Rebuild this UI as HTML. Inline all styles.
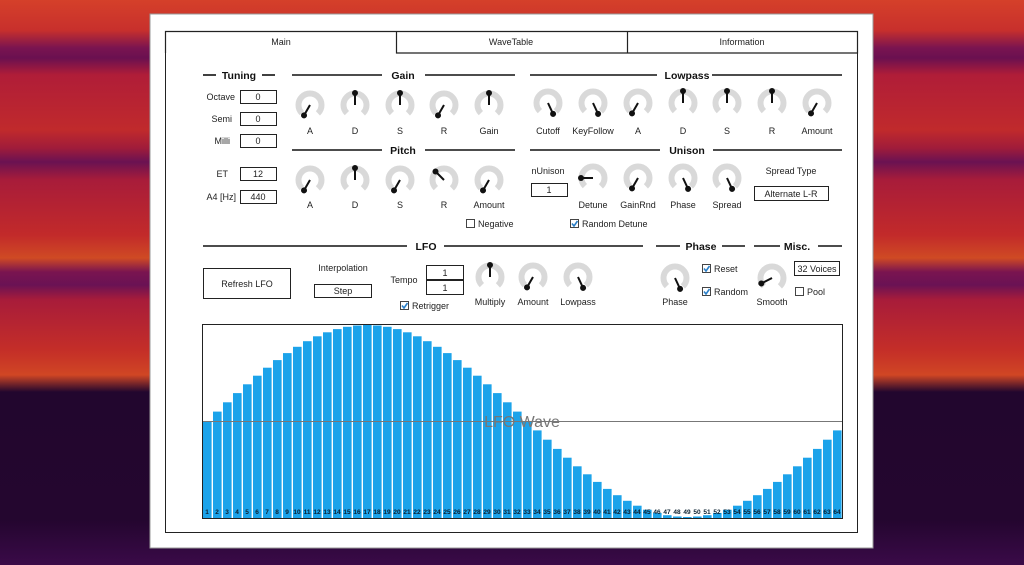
<!DOCTYPE html>
<html><head><meta charset="utf-8">
<style>
html,body{margin:0;padding:0;width:1024px;height:565px;overflow:hidden}
body{background:linear-gradient(to bottom,#d5402a 0px,#c8302c 30px,#7a1450 48px,#6a1050 58px,#b01d38 75px,#c02a2c 130px,#a01c3a 148px,#6a1252 162px,#a81c3a 180px,#c22a2a 235px,#cf4a24 258px,#7a1450 272px,#6a1254 285px,#a81c3a 300px,#c42e28 350px,#d04624 375px,#22062e 392px,#24062f 520px,#3a0a48 565px);font-family:"Liberation Sans",Arial,sans-serif}
svg{position:absolute;left:0;top:0}
text{font-family:"Liberation Sans",Arial,sans-serif;font-size:9px;fill:#222}
.h{font-weight:bold;font-size:10.5px;fill:#111}
.c{text-anchor:middle}
.r{text-anchor:end}
.n{font-size:6.5px;font-weight:bold;fill:#0a2030;text-anchor:middle}
</style></head><body>
<svg width="1024" height="565" viewBox="0 0 1024 565">
<defs>
<g id="ring"><circle r="11.5" fill="none" stroke="#d9d9d9" stroke-width="6" stroke-dasharray="54.2 18.06" transform="rotate(135)"/></g>
<g id="ptr"><line x1="0" y1="0" x2="0" y2="-12" stroke="#111" stroke-width="2"/><circle cy="-12" r="3" fill="#111"/></g>
</defs>
<rect x="150" y="14" width="723" height="534" fill="#fff" stroke="#999" stroke-width="1"/>
<!-- inner frame -->
<path d="M165.5 53 V532.5 H857.5 V53" fill="none" stroke="#222" stroke-width="1"/>
<path d="M165.5 53 V31.5 H857.5 V53 H396.5 V31.5 M627.5 31.5 V53" fill="none" stroke="#222" stroke-width="1.2"/>
<text class="c" x="281" y="45">Main</text>
<text class="c" x="511" y="45">WaveTable</text>
<text class="c" x="742" y="45">Information</text>

<g stroke="#111" stroke-width="1.6">
<line x1="203" y1="75" x2="216" y2="75"/><line x1="262" y1="75" x2="275" y2="75"/>
<line x1="292" y1="75" x2="382" y2="75"/><line x1="425" y1="75" x2="515" y2="75"/>
<line x1="530" y1="75" x2="657" y2="75"/><line x1="712" y1="75" x2="842" y2="75"/>
<line x1="292" y1="150" x2="382" y2="150"/><line x1="425" y1="150" x2="515" y2="150"/>
<line x1="530" y1="150" x2="660" y2="150"/><line x1="713" y1="150" x2="842" y2="150"/>
<line x1="203" y1="246" x2="407" y2="246"/><line x1="444" y1="246" x2="643" y2="246"/>
<line x1="656" y1="246" x2="680" y2="246"/><line x1="722" y1="246" x2="745" y2="246"/>
<line x1="754" y1="246" x2="780" y2="246"/><line x1="818" y1="246" x2="842" y2="246"/>
</g>
<text class="h c" x="239" y="79">Tuning</text>
<text class="h c" x="403" y="79">Gain</text>
<text class="h c" x="687" y="79">Lowpass</text>
<text class="h c" x="403" y="154">Pitch</text>
<text class="h c" x="687" y="154">Unison</text>
<text class="h c" x="426" y="250">LFO</text>
<text class="h c" x="701" y="250">Phase</text>
<text class="h c" x="797" y="250">Misc.</text>

<!-- tuning -->
<g fill="#fff" stroke="#222" stroke-width="1">
<rect x="240.5" y="90.5" width="36" height="13"/>
<rect x="240.5" y="112.5" width="36" height="13"/>
<rect x="240.5" y="134.5" width="36" height="13"/>
<rect x="240.5" y="167.5" width="36" height="13"/>
<rect x="240.5" y="190.5" width="36" height="13"/>
<rect x="531.5" y="183.5" width="36" height="13"/>
<rect x="754.5" y="186.5" width="74" height="14"/>
<rect x="203.5" y="268.5" width="87" height="30"/>
<rect x="314.5" y="284.5" width="57" height="13"/>
<rect x="426.5" y="265.5" width="37" height="14"/>
<rect x="426.5" y="280.5" width="37" height="14"/>
<rect x="794.5" y="261.5" width="45" height="14"/>
</g>
<text class="r" x="235" y="100">Octave</text><text class="c" x="258" y="100">0</text>
<text class="r" x="232" y="122">Semi</text><text class="c" x="258" y="122">0</text>
<text class="r" x="230" y="144">Milli</text><text class="c" x="258" y="144">0</text>
<text class="r" x="228" y="177">ET</text><text class="c" x="258" y="177">12</text>
<text class="r" x="236" y="200">A4 [Hz]</text><text class="c" x="258" y="200">440</text>
<text class="c" x="548" y="174">nUnison</text><text class="c" x="549" y="193">1</text>
<text class="c" x="791" y="174">Spread Type</text><text class="c" x="791" y="197">Alternate L-R</text>
<text class="c" x="247" y="287">Refresh LFO</text>
<text class="c" x="343" y="271">Interpolation</text><text class="c" x="343" y="294">Step</text>
<text class="c" x="404" y="283">Tempo</text>
<text class="c" x="445" y="276">1</text><text class="c" x="445" y="291">1</text>
<text class="c" x="817" y="272">32 Voices</text>

<!-- checkboxes -->
<g fill="#fff" stroke="#444" stroke-width="1">
<rect x="466.5" y="219.5" width="8" height="8"/>
<rect x="570.5" y="219.5" width="8" height="8"/>
<rect x="400.5" y="301.5" width="8" height="8"/>
<rect x="702.5" y="264.5" width="8" height="8"/>
<rect x="702.5" y="287.5" width="8" height="8"/>
<rect x="795.5" y="287.5" width="8" height="8"/>
</g>
<g fill="none" stroke="#2a7fc8" stroke-width="1.6">
<path d="M572 223.5 l2 2.5 l3.5 -5"/>
<path d="M402 305.5 l2 2.5 l3.5 -5"/>
<path d="M704 268.5 l2 2.5 l3.5 -5"/>
<path d="M704 291.5 l2 2.5 l3.5 -5"/>
</g>
<text x="478" y="227">Negative</text>
<text x="582" y="227">Random Detune</text>
<text x="412" y="309">Retrigger</text>
<text x="714" y="272">Reset</text>
<text x="714" y="295">Random</text>
<text x="807" y="295">Pool</text>

<!-- knobs -->
<g>
<g transform="translate(310,105)"><use href="#ring"/><use href="#ptr" transform="rotate(-150)"/></g>
<g transform="translate(355,105)"><use href="#ring"/><use href="#ptr"/></g>
<g transform="translate(400,105)"><use href="#ring"/><use href="#ptr"/></g>
<g transform="translate(444,105)"><use href="#ring"/><use href="#ptr" transform="rotate(-150)"/></g>
<g transform="translate(489,105)"><use href="#ring"/><use href="#ptr"/></g>
<g transform="translate(310,180)"><use href="#ring"/><use href="#ptr" transform="rotate(-150)"/></g>
<g transform="translate(355,180)"><use href="#ring"/><use href="#ptr"/></g>
<g transform="translate(400,180)"><use href="#ring"/><use href="#ptr" transform="rotate(-150)"/></g>
<g transform="translate(444,180)"><use href="#ring"/><use href="#ptr" transform="rotate(-45)"/></g>
<g transform="translate(489,180)"><use href="#ring"/><use href="#ptr" transform="rotate(-150)"/></g>
<g transform="translate(548,103)"><use href="#ring"/><use href="#ptr" transform="rotate(155)"/></g>
<g transform="translate(593,103)"><use href="#ring"/><use href="#ptr" transform="rotate(155)"/></g>
<g transform="translate(638,103)"><use href="#ring"/><use href="#ptr" transform="rotate(-150)"/></g>
<g transform="translate(683,103)"><use href="#ring"/><use href="#ptr"/></g>
<g transform="translate(727,103)"><use href="#ring"/><use href="#ptr"/></g>
<g transform="translate(772,103)"><use href="#ring"/><use href="#ptr"/></g>
<g transform="translate(817,103)"><use href="#ring"/><use href="#ptr" transform="rotate(-150)"/></g>
<g transform="translate(593,178)"><use href="#ring"/><use href="#ptr" transform="rotate(-90)"/></g>
<g transform="translate(638,178)"><use href="#ring"/><use href="#ptr" transform="rotate(-150)"/></g>
<g transform="translate(683,178)"><use href="#ring"/><use href="#ptr" transform="rotate(155)"/></g>
<g transform="translate(727,178)"><use href="#ring"/><use href="#ptr" transform="rotate(155)"/></g>
<g transform="translate(490,277)"><use href="#ring"/><use href="#ptr"/></g>
<g transform="translate(533,277)"><use href="#ring"/><use href="#ptr" transform="rotate(-150)"/></g>
<g transform="translate(578,277)"><use href="#ring"/><use href="#ptr" transform="rotate(155)"/></g>
<g transform="translate(675,278)"><use href="#ring"/><use href="#ptr" transform="rotate(155)"/></g>
<g transform="translate(772,278)"><use href="#ring"/><use href="#ptr" transform="rotate(-117)"/></g>
</g>
<g class="c">
<text class="c" x="310" y="134">A</text><text class="c" x="355" y="134">D</text><text class="c" x="400" y="134">S</text><text class="c" x="444" y="134">R</text><text class="c" x="489" y="134">Gain</text>
<text class="c" x="310" y="208">A</text><text class="c" x="355" y="208">D</text><text class="c" x="400" y="208">S</text><text class="c" x="444" y="208">R</text><text class="c" x="489" y="208">Amount</text>
<text class="c" x="548" y="134">Cutoff</text><text class="c" x="593" y="134">KeyFollow</text><text class="c" x="638" y="134">A</text><text class="c" x="683" y="134">D</text><text class="c" x="727" y="134">S</text><text class="c" x="772" y="134">R</text><text class="c" x="817" y="134">Amount</text>
<text class="c" x="593" y="208">Detune</text><text class="c" x="638" y="208">GainRnd</text><text class="c" x="683" y="208">Phase</text><text class="c" x="727" y="208">Spread</text>
<text class="c" x="490" y="305">Multiply</text><text class="c" x="533" y="305">Amount</text><text class="c" x="578" y="305">Lowpass</text>
<text class="c" x="675" y="305">Phase</text><text class="c" x="772" y="305">Smooth</text>
</g>

<!-- LFO graph -->
<rect x="202.5" y="324.5" width="640" height="194" fill="#fff" stroke="#222" stroke-width="1"/>
<g fill="#1ca3ea">
<rect x="203" y="421" width="8.6" height="97"/>
<rect x="213" y="411.6" width="8.6" height="106.4"/>
<rect x="223" y="402.3" width="8.6" height="115.7"/>
<rect x="233" y="393.1" width="8.6" height="124.9"/>
<rect x="243" y="384.3" width="8.6" height="133.7"/>
<rect x="253" y="375.7" width="8.6" height="142.3"/>
<rect x="263" y="367.7" width="8.6" height="150.3"/>
<rect x="273" y="360.1" width="8.6" height="157.9"/>
<rect x="283" y="353.1" width="8.6" height="164.9"/>
<rect x="293" y="346.8" width="8.6" height="171.2"/>
<rect x="303" y="341.2" width="8.6" height="176.8"/>
<rect x="313" y="336.3" width="8.6" height="181.7"/>
<rect x="323" y="332.3" width="8.6" height="185.7"/>
<rect x="333" y="329.1" width="8.6" height="188.9"/>
<rect x="343" y="326.8" width="8.6" height="191.2"/>
<rect x="353" y="325.5" width="8.6" height="192.5"/>
<rect x="363" y="325" width="8.6" height="193"/>
<rect x="373" y="325.5" width="8.6" height="192.5"/>
<rect x="383" y="326.8" width="8.6" height="191.2"/>
<rect x="393" y="329.1" width="8.6" height="188.9"/>
<rect x="403" y="332.3" width="8.6" height="185.7"/>
<rect x="413" y="336.3" width="8.6" height="181.7"/>
<rect x="423" y="341.2" width="8.6" height="176.8"/>
<rect x="433" y="346.8" width="8.6" height="171.2"/>
<rect x="443" y="353.1" width="8.6" height="164.9"/>
<rect x="453" y="360.1" width="8.6" height="157.9"/>
<rect x="463" y="367.7" width="8.6" height="150.3"/>
<rect x="473" y="375.7" width="8.6" height="142.3"/>
<rect x="483" y="384.3" width="8.6" height="133.7"/>
<rect x="493" y="393.1" width="8.6" height="124.9"/>
<rect x="503" y="402.3" width="8.6" height="115.7"/>
<rect x="513" y="411.6" width="8.6" height="106.4"/>
<rect x="523" y="421" width="8.6" height="97"/>
<rect x="533" y="430.4" width="8.6" height="87.6"/>
<rect x="543" y="439.7" width="8.6" height="78.3"/>
<rect x="553" y="448.9" width="8.6" height="69.1"/>
<rect x="563" y="457.7" width="8.6" height="60.3"/>
<rect x="573" y="466.3" width="8.6" height="51.7"/>
<rect x="583" y="474.3" width="8.6" height="43.7"/>
<rect x="593" y="481.9" width="8.6" height="36.1"/>
<rect x="603" y="488.9" width="8.6" height="29.1"/>
<rect x="613" y="495.2" width="8.6" height="22.8"/>
<rect x="623" y="500.8" width="8.6" height="17.2"/>
<rect x="633" y="505.7" width="8.6" height="12.3"/>
<rect x="643" y="509.7" width="8.6" height="8.3"/>
<rect x="653" y="512.9" width="8.6" height="5.1"/>
<rect x="663" y="515.2" width="8.6" height="2.8"/>
<rect x="673" y="516.5" width="8.6" height="1.5"/>
<rect x="683" y="517" width="8.6" height="1"/>
<rect x="693" y="516.5" width="8.6" height="1.5"/>
<rect x="703" y="515.2" width="8.6" height="2.8"/>
<rect x="713" y="512.9" width="8.6" height="5.1"/>
<rect x="723" y="509.7" width="8.6" height="8.3"/>
<rect x="733" y="505.7" width="8.6" height="12.3"/>
<rect x="743" y="500.8" width="8.6" height="17.2"/>
<rect x="753" y="495.2" width="8.6" height="22.8"/>
<rect x="763" y="488.9" width="8.6" height="29.1"/>
<rect x="773" y="481.9" width="8.6" height="36.1"/>
<rect x="783" y="474.3" width="8.6" height="43.7"/>
<rect x="793" y="466.3" width="8.6" height="51.7"/>
<rect x="803" y="457.7" width="8.6" height="60.3"/>
<rect x="813" y="448.9" width="8.6" height="69.1"/>
<rect x="823" y="439.7" width="8.6" height="78.3"/>
<rect x="833" y="430.4" width="8.6" height="87.6"/>
</g>
<line x1="203" y1="421.5" x2="842" y2="421.5" stroke="#777" stroke-width="1"/>
<text class="c" x="522" y="427" style="font-size:16px;fill:#777">LFO Wave</text>
<g>
<text class="n" x="207" y="514">1</text><text class="n" x="217" y="514">2</text><text class="n" x="227" y="514">3</text><text class="n" x="237" y="514">4</text><text class="n" x="247" y="514">5</text><text class="n" x="257" y="514">6</text><text class="n" x="267" y="514">7</text><text class="n" x="277" y="514">8</text>
<text class="n" x="287" y="514">9</text><text class="n" x="297" y="514">10</text><text class="n" x="307" y="514">11</text><text class="n" x="317" y="514">12</text><text class="n" x="327" y="514">13</text><text class="n" x="337" y="514">14</text><text class="n" x="347" y="514">15</text><text class="n" x="357" y="514">16</text>
<text class="n" x="367" y="514">17</text><text class="n" x="377" y="514">18</text><text class="n" x="387" y="514">19</text><text class="n" x="397" y="514">20</text><text class="n" x="407" y="514">21</text><text class="n" x="417" y="514">22</text><text class="n" x="427" y="514">23</text><text class="n" x="437" y="514">24</text>
<text class="n" x="447" y="514">25</text><text class="n" x="457" y="514">26</text><text class="n" x="467" y="514">27</text><text class="n" x="477" y="514">28</text><text class="n" x="487" y="514">29</text><text class="n" x="497" y="514">30</text><text class="n" x="507" y="514">31</text><text class="n" x="517" y="514">32</text>
<text class="n" x="527" y="514">33</text><text class="n" x="537" y="514">34</text><text class="n" x="547" y="514">35</text><text class="n" x="557" y="514">36</text><text class="n" x="567" y="514">37</text><text class="n" x="577" y="514">38</text><text class="n" x="587" y="514">39</text><text class="n" x="597" y="514">40</text>
<text class="n" x="607" y="514">41</text><text class="n" x="617" y="514">42</text><text class="n" x="627" y="514">43</text><text class="n" x="637" y="514">44</text><text class="n" x="647" y="514">45</text><text class="n" x="657" y="514">46</text><text class="n" x="667" y="514">47</text><text class="n" x="677" y="514">48</text>
<text class="n" x="687" y="514">49</text><text class="n" x="697" y="514">50</text><text class="n" x="707" y="514">51</text><text class="n" x="717" y="514">52</text><text class="n" x="727" y="514">53</text><text class="n" x="737" y="514">54</text><text class="n" x="747" y="514">55</text><text class="n" x="757" y="514">56</text>
<text class="n" x="767" y="514">57</text><text class="n" x="777" y="514">58</text><text class="n" x="787" y="514">59</text><text class="n" x="797" y="514">60</text><text class="n" x="807" y="514">61</text><text class="n" x="817" y="514">62</text><text class="n" x="827" y="514">63</text><text class="n" x="837" y="514">64</text>
</g>
</svg>
</body></html>
